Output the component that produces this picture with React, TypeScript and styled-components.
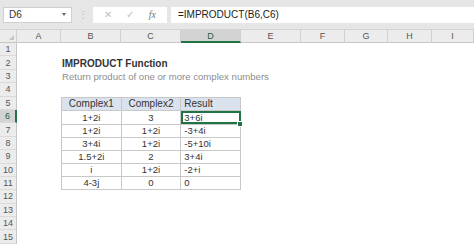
import styled, { createGlobalStyle } from "styled-components";

const GlobalStyle = createGlobalStyle`
  body {
    margin: 0;
    background: #ffffff;
    font-family: "Liberation Sans", Arial, sans-serif;
  }
`;

const GREEN = "#217346";

const columns = [
  { name: "A", width: 44 },
  { name: "B", width: 60 },
  { name: "C", width: 60 },
  { name: "D", width: 60 },
  { name: "E", width: 60 },
  { name: "F", width: 44 },
  { name: "G", width: 43 },
  { name: "H", width: 44 },
  { name: "I", width: 42 },
];

const rows = Array.from({ length: 15 }, (_, i) => i + 1);

const tableRows = [
  ["1+2i", "3", "3+6i"],
  ["1+2i", "1+2i", "-3+4i"],
  ["3+4i", "1+2i", "-5+10i"],
  ["1.5+2i", "2", "3+4i"],
  ["i", "1+2i", "-2+i"],
  ["4-3j", "0", "0"],
];

function App() {
  return (
    <Window>
      <GlobalStyle />
      <FormulaBar>
        <NameBox>
          <span>D6</span>
          <Caret />
        </NameBox>
        <Grip>⋮</Grip>
        <IconBox>
          <BarIcon>✕</BarIcon>
          <BarIcon>✓</BarIcon>
          <FxIcon>fx</FxIcon>
        </IconBox>
        <FormulaInput>=IMPRODUCT(B6,C6)</FormulaInput>
      </FormulaBar>

      <Sheet>
        <Corner>
          <CornerMark />
        </Corner>
        {columns.map((c) => (
          <ColHeader key={c.name} $active={c.name === "D"}>
            {c.name}
          </ColHeader>
        ))}
        {rows.map((r) => (
          <RowHeader key={r} style={{ gridRow: r + 1 }} $active={r === 6}>
            {r}
          </RowHeader>
        ))}

        <Title>IMPRODUCT Function</Title>
        <Subtitle>Return product of one or more complex numbers</Subtitle>

        <TableArea>
          <DataTable>
            <tbody>
              <tr>
                <HeadCell $align="center">Complex1</HeadCell>
                <HeadCell $align="center">Complex2</HeadCell>
                <HeadCell $align="left">Result</HeadCell>
              </tr>
              {tableRows.map((row, i) => (
                <tr key={i}>
                  <Cell $align="center">{row[0]}</Cell>
                  <Cell $align="center">{row[1]}</Cell>
                  {i === 0 ? (
                    <SelectedCell $align="left">
                      {row[2]}
                      <Handle />
                    </SelectedCell>
                  ) : (
                    <Cell $align="left">{row[2]}</Cell>
                  )}
                </tr>
              ))}
            </tbody>
          </DataTable>
        </TableArea>
      </Sheet>
    </Window>
  );
}

export default App;

const Window = styled.div`
  width: 474px;
  height: 248px;
  overflow: hidden;
  background: #ffffff;
`;

const FormulaBar = styled.div`
  height: 30px;
  background: #e6e6e6;
  display: flex;
  align-items: center;
  padding: 0 0 0 3px;
  box-sizing: border-box;
  border-bottom: 1px solid #d4d4d4;
`;

const NameBox = styled.div`
  width: 69px;
  height: 16px;
  background: #ffffff;
  border: 1px solid #cfcfcf;
  box-sizing: border-box;
  display: flex;
  align-items: center;
  justify-content: space-between;
  padding: 0 5px 0 5px;
  font-size: 10px;
  color: #333333;
`;

const Caret = styled.span`
  width: 0;
  height: 0;
  border-left: 2.5px solid transparent;
  border-right: 2.5px solid transparent;
  border-top: 3px solid #666666;
`;

const Grip = styled.span`
  width: 21px;
  text-align: center;
  color: #b5b5b5;
  font-size: 10px;
`;

const IconBox = styled.div`
  width: 74px;
  height: 16px;
  background: #ffffff;
  display: flex;
  align-items: center;
  justify-content: space-around;
  padding: 0 4px;
  box-sizing: border-box;
`;

const BarIcon = styled.span`
  color: #c2c2c2;
  font-size: 10px;
`;

const FxIcon = styled.span`
  color: #777777;
  font-family: "Liberation Serif", serif;
  font-style: italic;
  font-size: 10px;
`;

const FormulaInput = styled.div`
  flex: 1;
  height: 16px;
  margin-left: 4px;
  background: #ffffff;
  display: flex;
  align-items: center;
  padding-left: 7px;
  font-size: 10px;
  color: #222222;
`;

const Sheet = styled.div`
  display: grid;
  grid-template-columns: 17px ${columns.map((c) => c.width + "px").join(" ")};
  grid-template-rows: 13px repeat(15, 13.4px);
`;

const Corner = styled.div`
  grid-row: 1;
  grid-column: 1;
  background: #ececec;
  border-right: 1px solid #d0d0d0;
  border-bottom: 1px solid #c6c6c6;
  position: relative;
`;

const CornerMark = styled.span`
  position: absolute;
  right: 2px;
  bottom: 2px;
  width: 0;
  height: 0;
  border-left: 5px solid transparent;
  border-bottom: 5px solid #c4c4c4;
`;

const ColHeader = styled.div<{ $active?: boolean }>`
  grid-row: 1;
  background: ${(p) => (p.$active ? "#d3d3d3" : "#ececec")};
  border-right: 1px solid #d0d0d0;
  border-bottom: ${(p) => (p.$active ? `2px solid ${GREEN}` : "1px solid #c6c6c6")};
  color: ${(p) => (p.$active ? "#2a5e3e" : "#555555")};
  font-size: 9px;
  display: flex;
  align-items: center;
  justify-content: center;
`;

const RowHeader = styled.div<{ $active?: boolean }>`
  grid-column: 1;
  background: ${(p) => (p.$active ? "#d3d3d3" : "#ececec")};
  border-right: ${(p) => (p.$active ? `2px solid ${GREEN}` : "1px solid #c6c6c6")};
  border-bottom: 1px solid #dadada;
  color: ${(p) => (p.$active ? "#2a5e3e" : "#555555")};
  font-size: 9px;
  display: flex;
  align-items: center;
  justify-content: center;
`;

const Title = styled.div`
  grid-row: 3;
  grid-column: 3 / span 4;
  align-self: center;
  padding-left: 1px;
  font-size: 10px;
  font-weight: bold;
  color: #333333;
  white-space: nowrap;
`;

const Subtitle = styled.div`
  grid-row: 4;
  grid-column: 3 / span 5;
  align-self: center;
  padding-left: 1px;
  font-size: 9.6px;
  color: #8e8e8e;
  white-space: nowrap;
`;

const TableArea = styled.div`
  grid-row: 6 / 13;
  grid-column: 3 / 6;
`;

const DataTable = styled.table`
  width: 100%;
  height: 100%;
  border-collapse: collapse;
  table-layout: fixed;
`;

const Cell = styled.td<{ $align: "left" | "center" }>`
  border: 1px solid #c8c8c8;
  padding: 0 3px;
  text-align: ${(p) => p.$align};
  font-size: 9.5px;
  color: #333333;
  line-height: 1;
  white-space: nowrap;
`;

const HeadCell = styled(Cell)`
  background: #dae2ee;
  font-size: 10px;
`;

const SelectedCell = styled(Cell)`
  position: relative;
  outline: 2px solid ${GREEN};
  outline-offset: -2px;
`;

const Handle = styled.span`
  position: absolute;
  right: -3px;
  bottom: -3px;
  width: 4px;
  height: 4px;
  background: ${GREEN};
  border: 1px solid #ffffff;
`;
